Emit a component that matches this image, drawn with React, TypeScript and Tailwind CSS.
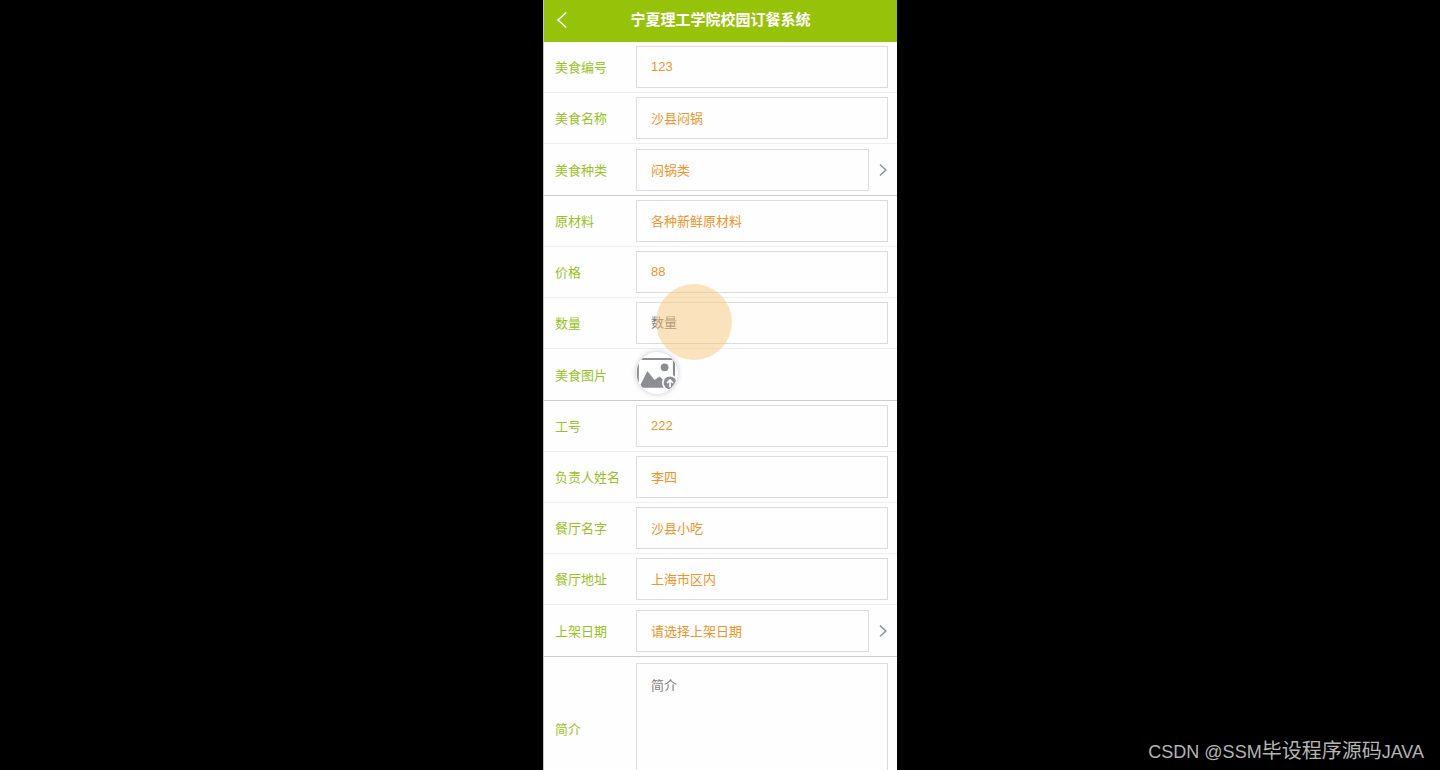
import type { ReactNode } from "react";

const font =
  "font-['Liberation_Sans','Noto_Sans_CJK_SC',sans-serif]";

const box =
  "h-[42px] min-w-0 flex-1 rounded-none border border-[#dcdcdc] bg-[#fefefe] px-3.5 text-[13px] text-[#ee9428] outline-none placeholder:text-[#808080]";

function Row({
  id,
  label,
  strong = false,
  children,
}: {
  id: string;
  label: string;
  strong?: boolean;
  children: ReactNode;
}) {
  return (
    <div
      className={
        strong
          ? "relative flex h-[52px] items-center border-b border-[#cdcdcd] pt-px pr-[9px] pl-[11px]"
          : "relative flex h-[51px] items-center border-b border-[#eeeeee] pr-[9px] pl-[11px]"
      }
    >
      <label htmlFor={id} className="w-[81px] shrink-0 pt-0.5 text-[13px] text-[#98c21e]">
        {label}
      </label>
      {children}
    </div>
  );
}

function TextRow({ id, label, value }: { id: string; label: string; value: string }) {
  return (
    <Row id={id} label={label}>
      <input id={id} className={`${box} pb-0.5`} defaultValue={value} placeholder={label} />
    </Row>
  );
}

function Chevron() {
  return (
    <svg viewBox="0 0 8 14" className="ml-2.5 mr-px h-3.5 w-2 shrink-0" fill="none" aria-hidden="true">
      <path d="M1 1.5 6.8 7 1 12.5" stroke="#8b9aa5" strokeWidth="1.7" />
    </svg>
  );
}

function UploadIcon() {
  return (
    <svg viewBox="0 0 42 42" className="size-[42px]" aria-hidden="true">
      <defs>
        <clipPath id="disc">
          <circle cx="21" cy="21" r="20.5" />
        </clipPath>
      </defs>
      <g clipPath="url(#disc)">
        <path d="M1.8 34V8.5Q1.8 7 3.5 7H36.3Q38 7 38 8.5V25" fill="none" stroke="#8d8e91" strokeWidth="2.2" />
        <path d="M3 35.8 11.4 19 18.6 28 23.5 24.5 29 29.5V35.8Z" fill="#8d8e91" />
        <circle cx="28.6" cy="15.3" r="3.9" fill="#8d8e91" />
        <circle cx="34" cy="30.8" r="8" fill="#fff" />
        <circle cx="34" cy="30.8" r="6.4" fill="#8d8e91" />
        <path d="M34 35.2V28.5M31 31l3-3 3 3" fill="none" stroke="#fff" strokeWidth="1.7" />
      </g>
    </svg>
  );
}

export default function App() {
  return (
    <div className={`${font} relative h-screen overflow-hidden bg-black`}>
      <main className="mx-auto h-full max-w-[354px] overflow-hidden border-l border-[#c8c8c8] bg-[#fefefe]">
        <header className="grid h-[42px] grid-cols-[40px_1fr_40px] items-center bg-[#96c20a] pb-0.5 text-white">
          <button type="button" aria-label="返回" className="flex h-full items-center pl-3">
            <svg viewBox="0 0 12 18" className="h-[18px] w-3" fill="none" aria-hidden="true">
              <path d="M10.3 1.5 2 9l8.3 7.5" stroke="currentColor" strokeWidth="1.6" />
            </svg>
          </button>
          <h1 className="text-center text-[15px] font-bold">宁夏理工学院校园订餐系统</h1>
        </header>

        <form>
          <TextRow id="code" label="美食编号" value="123" />
          <TextRow id="name" label="美食名称" value="沙县闷锅" />
          <Row id="kind" label="美食种类" strong>
            <select id="kind" className={`${box} appearance-none pt-0.5`}>
              <option>闷锅类</option>
            </select>
            <Chevron />
          </Row>
          <TextRow id="material" label="原材料" value="各种新鲜原材料" />
          <TextRow id="price" label="价格" value="88" />
          <Row id="amount" label="数量">
            <input id="amount" className={`${box} pb-0.5`} placeholder="数量" />
            <span className="pointer-events-none absolute -top-3.5 left-28 z-10 size-[76px] rounded-full bg-[#f6c16c]/45" />
          </Row>
          <Row id="photo" label="美食图片" strong>
            <div className="pb-1">
              <button
                id="photo"
                type="button"
                className="block rounded-full bg-white shadow-[0_0_5px_rgba(90,90,110,0.35)]"
              >
                <UploadIcon />
              </button>
            </div>
          </Row>
          <TextRow id="staff" label="工号" value="222" />
          <TextRow id="manager" label="负责人姓名" value="李四" />
          <TextRow id="hall" label="餐厅名字" value="沙县小吃" />
          <TextRow id="address" label="餐厅地址" value="上海市区内" />
          <Row id="date" label="上架日期" strong>
            <button id="date" type="button" className={`${box} pt-0.5 text-left`}>
              请选择上架日期
            </button>
            <Chevron />
          </Row>
          <div className="flex items-center py-1.5 pr-[9px] pl-[11px]">
            <label htmlFor="intro" className="w-[81px] shrink-0 text-[13px] text-[#98c21e]">
              简介
            </label>
            <textarea
              id="intro"
              placeholder="简介"
              className="h-[133px] min-w-0 flex-1 resize-none border border-[#dcdcdc] bg-[#fefefe] px-3.5 py-3 text-[13px] leading-5 outline-none placeholder:text-[#808080]"
            />
          </div>
        </form>
      </main>
      <p className="absolute right-4 bottom-1 text-lg text-[#b4b4b4]">
        CSDN @SSM<span className="text-xl">毕设程序源码</span>JAVA
      </p>
    </div>
  );
}
